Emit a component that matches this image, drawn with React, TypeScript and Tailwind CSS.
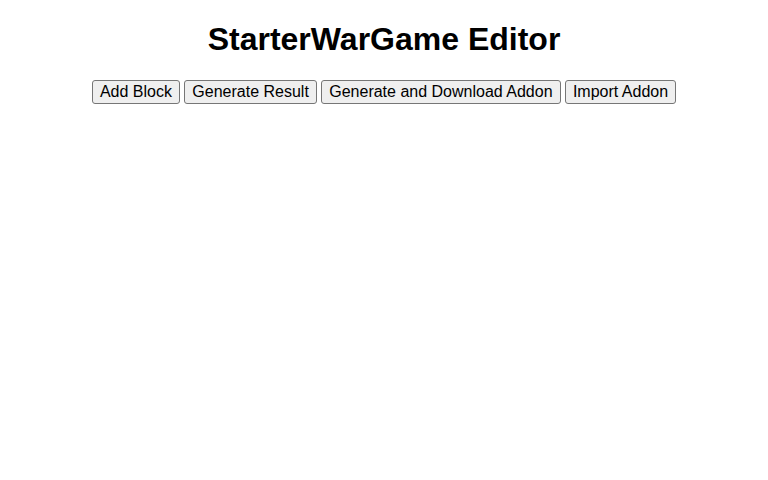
import React from "react";

const actions = [
  "Add Block",
  "Generate Result",
  "Generate and Download Addon",
  "Import Addon",
];

export default function App() {
  return (
    <div className="min-h-[480px] bg-white text-black font-['Liberation_Sans',Arial,sans-serif]">
      <h1 className="text-center text-[32px] font-bold leading-[37px] pt-[21px]">
        StarterWarGame Editor
      </h1>
      <div className="flex justify-center gap-[4.4px] mt-[22px]">
        {actions.map((label) => (
          <button
            key={label}
            type="button"
            className="bg-[#efefef] border border-[#767676] rounded-[3px] px-[7px] py-[2px] text-[16px] leading-[18px] text-black hover:bg-[#e5e5e5]"
          >
            {label}
          </button>
        ))}
      </div>
    </div>
  );
}
